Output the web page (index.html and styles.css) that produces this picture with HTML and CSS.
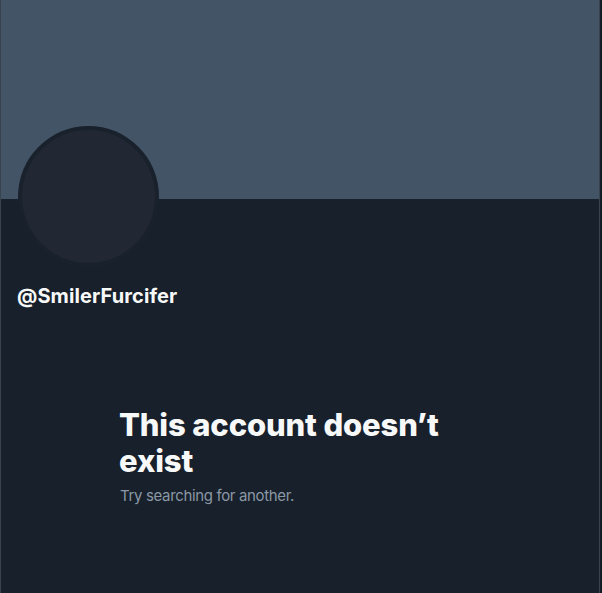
FILE: index.html
```html
<!DOCTYPE html>
<html lang="en">
<head>
<meta charset="utf-8">
<title>Profile</title>
<link rel="stylesheet" href="styles.css">
</head>
<body>
<main class="column">
  <div class="banner"></div>
  <section class="profile">
    <div class="avatar"><div class="avatar-inner"></div></div>
    <div class="handle">@SmilerFurcifer</div>
  </section>
  <section class="empty">
    <h1 class="empty-title">This account doesn’t exist</h1>
    <p class="empty-sub">Try searching for another.</p>
  </section>
</main>
</body>
</html>
```
FILE: styles.css
```css
html, body {
  margin: 0;
  padding: 0;
  background: #141c25;
  height: 100%;
}
body {
  font-family: Inter, "Noto Sans", "Liberation Sans", sans-serif;
  overflow: hidden;
}
.column {
  width: 598px;
  height: 593px;
  background: #17202b;
  border-left: 1px solid #38444d;
  border-right: 1px solid #38444d;
}
.banner {
  height: 199px;
  background: #435466;
}
.profile {
  padding: 0 16px;
}
.avatar {
  width: 141px;
  height: 141px;
  margin-top: -73px;
  margin-left: 1px;
  border-radius: 50%;
  background: #19222c;
  padding: 4px;
  box-sizing: border-box;
}
.avatar-inner {
  width: 100%;
  height: 100%;
  border-radius: 50%;
  background: #212833;
}
.handle {
  margin-top: 17px;
  color: #f7f9f9;
  font-size: 20px;
  font-weight: 700;
  line-height: 24px;
  letter-spacing: 0.1px;
}
.empty {
  margin: 99px 0 0 118px;
  width: 340px;
}
.empty-title {
  margin: 0;
  color: #f7f9f9;
  font-size: 31px;
  font-weight: 800;
  line-height: 36px;
  letter-spacing: -0.15px;
}
.empty-sub {
  margin: 7px 0 0 1px;
  color: #8b98a5;
  font-size: 15px;
  line-height: 20px;
  letter-spacing: -0.35px;
}
```
